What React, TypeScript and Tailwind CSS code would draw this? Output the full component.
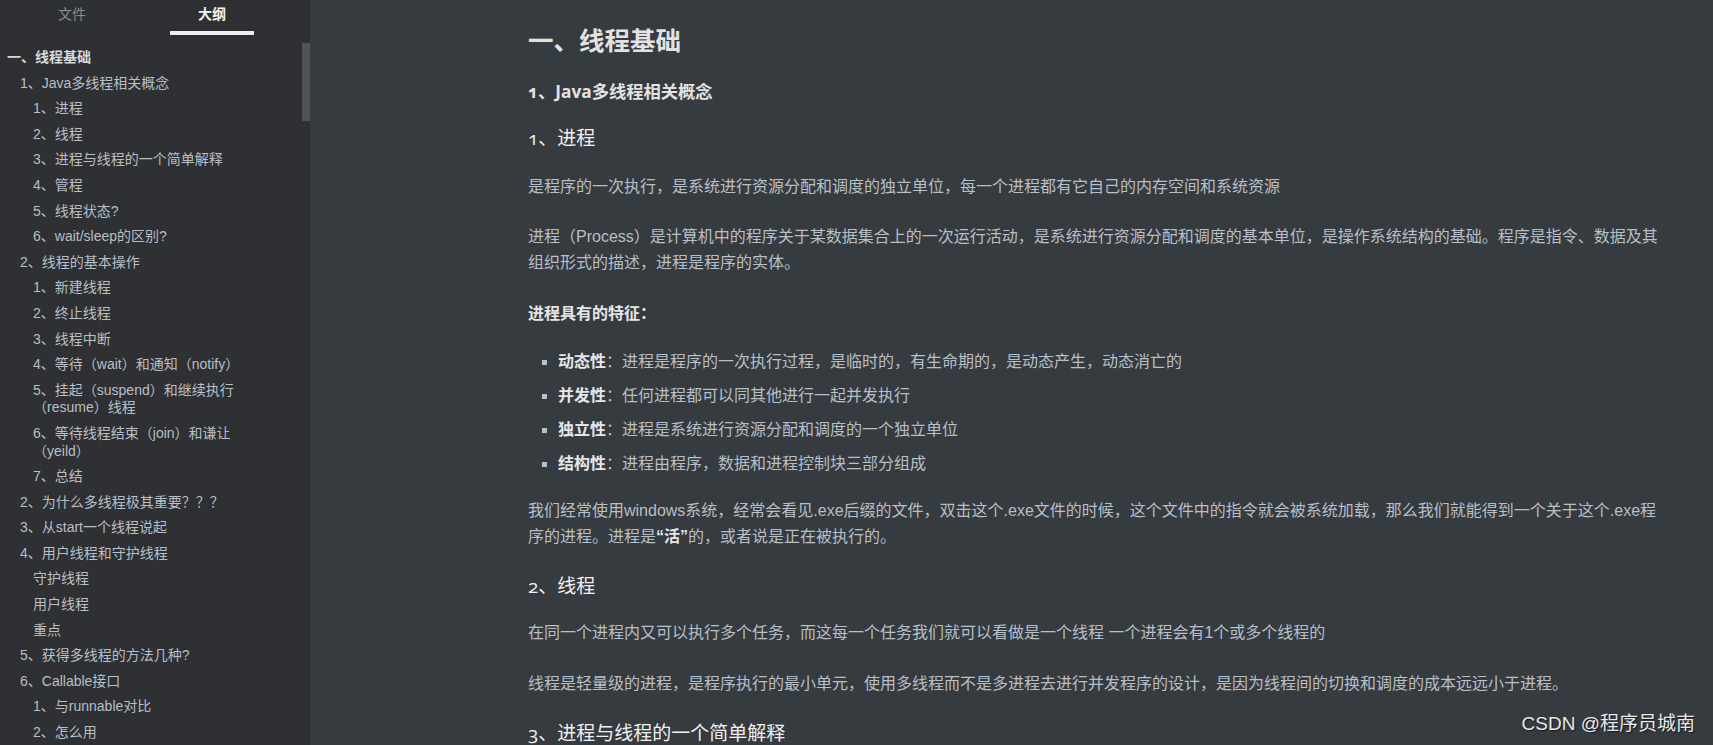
import React from 'react';

type OutlineItem = { label: string; level: 0 | 1 | 2 };

const outline: OutlineItem[] = [
  { label: '一、线程基础', level: 0 },
  { label: '1、Java多线程相关概念', level: 1 },
  { label: '1、进程', level: 2 },
  { label: '2、线程', level: 2 },
  { label: '3、进程与线程的一个简单解释', level: 2 },
  { label: '4、管程', level: 2 },
  { label: '5、线程状态?', level: 2 },
  { label: '6、wait/sleep的区别?', level: 2 },
  { label: '2、线程的基本操作', level: 1 },
  { label: '1、新建线程', level: 2 },
  { label: '2、终止线程', level: 2 },
  { label: '3、线程中断', level: 2 },
  { label: '4、等待（wait）和通知（notify）', level: 2 },
  { label: '5、挂起（suspend）和继续执行（resume）线程', level: 2 },
  { label: '6、等待线程结束（join）和谦让（yeild）', level: 2 },
  { label: '7、总结', level: 2 },
  { label: '2、为什么多线程极其重要？？？', level: 1 },
  { label: '3、从start一个线程说起', level: 1 },
  { label: '4、用户线程和守护线程', level: 1 },
  { label: '守护线程', level: 2 },
  { label: '用户线程', level: 2 },
  { label: '重点', level: 2 },
  { label: '5、获得多线程的方法几种?', level: 1 },
  { label: '6、Callable接口', level: 1 },
  { label: '1、与runnable对比', level: 2 },
  { label: '2、怎么用', level: 2 },
];

const features = [
  { name: '动态性', text: '进程是程序的一次执行过程，是临时的，有生命期的，是动态产生，动态消亡的' },
  { name: '并发性', text: '任何进程都可以同其他进行一起并发执行' },
  { name: '独立性', text: '进程是系统进行资源分配和调度的一个独立单位' },
  { name: '结构性', text: '进程由程序，数据和进程控制块三部分组成' },
];

const sans = "font-['Liberation_Sans','Noto_Sans_CJK_SC',sans-serif]";
const heading = "font-['Open_Sans','Noto_Sans_CJK_SC',sans-serif] oldstyle-nums";

function Sidebar() {
  return (
    <aside className={`flex h-full w-[310px] shrink-0 flex-col bg-[#2e3033] ${sans}`}>
      <div className="flex h-[40px] shrink-0 pl-[2px]">
        <div className="flex w-[140px] justify-center pt-[4px] text-[14px] leading-[20px] text-[#8a8c8f]">文件</div>
        <div className="flex w-[140px] flex-col items-center pt-[4px]">
          <span className="text-[14px] font-bold leading-[20px] text-[#f2f2f2]">大纲</span>
          <span className="mt-[7px] h-[4px] w-[84px] bg-[#f0f0f0]" />
        </div>
      </div>
      <div className="relative flex-1 overflow-hidden">
        <ul className="pt-[5px]">
          {outline.map((item, i) => (
            <li
              key={i}
              className={`py-[4px] pr-[32px] text-[14px] leading-[17.6px] ${
                item.level === 0
                  ? 'pl-[7px] font-bold text-[#d6d9dc]'
                  : item.level === 1
                    ? 'pl-[20px] text-[#b8bfc6]'
                    : 'pl-[33px] text-[#b8bfc6]'
              }`}
            >
              {item.label}
            </li>
          ))}
        </ul>
        <div className="absolute right-0 top-[3px] h-[78px] w-[8px] bg-[#505356]" />
      </div>
    </aside>
  );
}

function Para({ children, className = '' }: { children: React.ReactNode; className?: string }) {
  return <p className={`text-[16px] leading-[26.6px] text-[#b8bfc6] ${className}`}>{children}</p>;
}

export default function App() {
  return (
    <div className="flex h-[745px] w-full overflow-hidden bg-[#363b40]">
      <Sidebar />
      <main className={`relative flex-1 overflow-hidden pl-[218px] pt-[22px] ${sans}`}>
        <article className="w-[1138px]">
          <h1 className={`text-[25.5px] font-bold leading-[36px] text-[#e2e2e2] ${heading}`}>一、线程基础</h1>
          <h2 className={`mt-[21px] text-[17.3px] font-bold leading-[26px] text-[#e2e2e2] ${heading}`}>
            1、Java多线程相关概念
          </h2>
          <h3 className={`mt-[19px] text-[19px] leading-[28px] text-[#f0f0f0] ${heading}`}>1、进程</h3>
          <Para className="mt-[22px]">
            是程序的一次执行，是系统进行资源分配和调度的独立单位，每一个进程都有它自己的内存空间和系统资源
          </Para>
          <Para className="mt-[23px]">
            进程（Process）是计算机中的程序关于某数据集合上的一次运行活动，是系统进行资源分配和调度的基本单位，是操作系统结构的基础。程序是指令、数据及其组织形式的描述，进程是程序的实体。
          </Para>
          <Para className="mt-[24px]">
            <strong className="font-bold text-[#e6e6e6]">进程具有的特征：</strong>
          </Para>
          <ul className="mt-[22px] list-[square] pl-[30px] text-[#b8bfc6]">
            {features.map((f) => (
              <li key={f.name} className="mb-[7.3px] text-[16px] leading-[26.6px]">
                <strong className="font-bold text-[#e6e6e6]">{f.name}</strong>：{f.text}
              </li>
            ))}
          </ul>
          <Para className="mt-[20px]">
            我们经常使用windows系统，经常会看见.exe后缀的文件，双击这个.exe文件的时候，这个文件中的指令就会被系统加载，那么我们就能得到一个关于这个.exe程序的进程。进程是
            <strong className="font-bold text-[#e6e6e6]">“活”</strong>的，或者说是正在被执行的。
          </Para>
          <h3 className={`mt-[21px] text-[19px] leading-[28px] text-[#f0f0f0] ${heading}`}>2、线程</h3>
          <Para className="mt-[20px]">在同一个进程内又可以执行多个任务，而这每一个任务我们就可以看做是一个线程 一个进程会有1个或多个线程的</Para>
          <Para className="mt-[25px]">
            线程是轻量级的进程，是程序执行的最小单元，使用多线程而不是多进程去进行并发程序的设计，是因为线程间的切换和调度的成本远远小于进程。
          </Para>
          <h3 className={`mt-[21px] text-[19px] leading-[28px] text-[#f0f0f0] ${heading}`}>3、进程与线程的一个简单解释</h3>
        </article>
        <div className="absolute bottom-[9px] right-[18px] text-[19px] leading-[24px] text-[#e8e8e8] [text-shadow:1px_1px_1px_rgba(0,0,0,0.6)]">
          CSDN @程序员城南
        </div>
      </main>
    </div>
  );
}
